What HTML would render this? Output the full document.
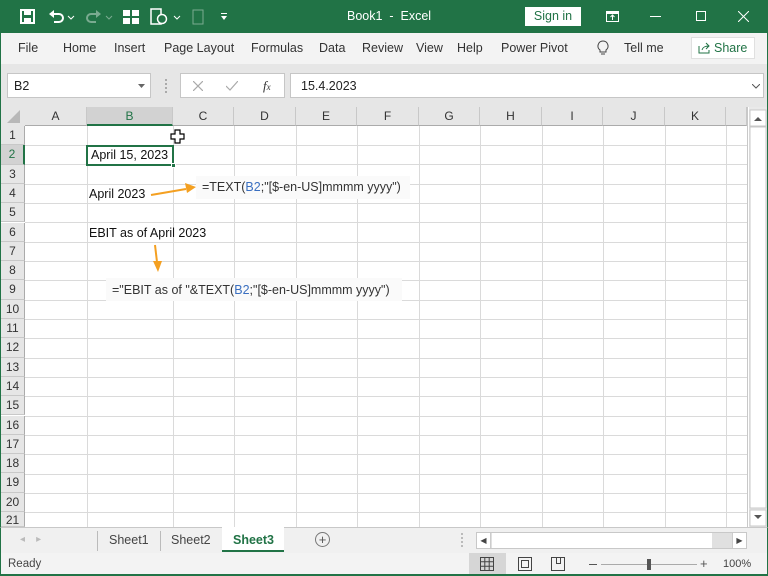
<!DOCTYPE html>
<html><head><meta charset="utf-8"><style>
*{margin:0;padding:0;box-sizing:border-box}
body{width:768px;height:576px;overflow:hidden;font-family:"Liberation Sans",sans-serif;background:#fff;position:relative;font-size:12px;color:#222}
.abs{position:absolute}
#title{left:0;top:0;width:768px;height:33px;background:#217346;color:#fff}
#ribbon{left:0;top:33px;width:768px;height:31px;background:#f3f3f3;border-left:1px solid #217346;border-right:1px solid #217346}
#ribbon span{position:absolute;top:8px;font-size:12.5px;color:#333}
#fbar{left:0;top:64px;width:768px;height:43px;background:#e6e6e6;border-left:1px solid #217346;border-right:1px solid #217346}
.box{position:absolute;background:#fff;border:1px solid #c6c6c6}
.ch{position:absolute;top:107px;height:19px;background:#e6e6e6;border-right:1px solid #c8c8c8;border-bottom:1px solid #ababab;text-align:center;line-height:19px;font-size:12px;color:#333}
.rh{position:absolute;left:1px;width:24px;background:#e6e6e6;border-bottom:1px solid #c8c8c8;border-right:1px solid #ababab;text-align:center;font-size:12px;color:#333}
.t{position:absolute;font-size:12.5px;color:#111;white-space:nowrap}
</style></head><body>
<div id="title" class="abs">
<svg class="abs" style="left:20px;top:9px" width="16" height="16"><rect x="1" y="1" width="13" height="13" fill="none" stroke="#fff" stroke-width="2"/><rect x="4" y="2" width="7" height="4" fill="#fff"/><rect x="4" y="9" width="7" height="5" fill="#fff"/></svg>
<svg class="abs" style="left:48px;top:9px" width="30" height="16"><path d="M4 5h7a4 4 0 0 1 0 8H6" fill="none" stroke="#fff" stroke-width="2"/><path d="M1 5l5-4v8z" fill="#fff"/><path d="M20 7l3 3 3-3" fill="none" stroke="#fff"/></svg>
<svg class="abs" style="left:86px;top:9px" width="30" height="16" opacity=".4"><path d="M12 5H5a4 4 0 0 0 0 8h5" fill="none" stroke="#fff" stroke-width="2"/><path d="M15 5l-5-4v8z" fill="#fff"/><path d="M20 7l3 3 3-3" fill="none" stroke="#fff"/></svg>
<svg class="abs" style="left:123px;top:10px" width="16" height="14"><rect x="0" y="0" width="7" height="6" fill="#fff"/><rect x="9" y="0" width="7" height="6" fill="#fff"/><rect x="0" y="8" width="7" height="6" fill="#fff"/><rect x="9" y="8" width="7" height="6" fill="#fff"/></svg>
<svg class="abs" style="left:150px;top:8px" width="32" height="18"><rect x="1" y="1" width="10" height="15" fill="none" stroke="#fff" stroke-width="1.5"/><circle cx="12" cy="11" r="4.5" fill="#217346" stroke="#fff" stroke-width="1.5"/><path d="M24 8l3 3 3-3" fill="none" stroke="#fff"/></svg>
<svg class="abs" style="left:192px;top:9px" width="14" height="17" opacity=".4"><rect x="1" y="1" width="10" height="14" fill="none" stroke="#fff"/></svg>
<svg class="abs" style="left:220px;top:12px" width="8" height="10"><rect x="1" y="1" width="6" height="1" fill="#fff"/><path d="M1 4h6l-3 4z" fill="#fff"/></svg>
<div class="abs" style="left:347px;top:9px;font-size:12.5px">Book1 &nbsp;- &nbsp;Excel</div>
<div class="abs" style="left:525px;top:7px;width:56px;height:19px;background:#fff;color:#217346;font-size:12.5px;text-align:center;line-height:19px">Sign in</div>
<svg class="abs" style="left:606px;top:11px" width="13" height="11"><rect x=".5" y=".5" width="12" height="10" fill="none" stroke="#fff"/><rect x="1" y="1" width="11" height="2" fill="#fff"/><path d="M6.5 4v5M4.5 6l2-2 2 2" stroke="#fff" fill="none"/></svg>
<div class="abs" style="left:650px;top:16px;width:11px;height:1px;background:#fff"></div>
<div class="abs" style="left:696px;top:11px;width:10px;height:10px;border:1px solid #fff"></div>
<svg class="abs" style="left:738px;top:11px" width="11" height="11"><path d="M0 0L11 11M11 0L0 11" stroke="#fff"/></svg>
</div>
<div id="ribbon" class="abs">
<span style="left:17px">File</span><span style="left:62px">Home</span><span style="left:113px">Insert</span><span style="left:163px">Page Layout</span><span style="left:250px">Formulas</span><span style="left:318px">Data</span><span style="left:361px">Review</span><span style="left:415px">View</span><span style="left:456px">Help</span><span style="left:500px">Power Pivot</span>
<svg class="abs" style="left:596px;top:7px" width="12" height="16"><path d="M6 1a5 5 0 0 1 3 9v2H3v-2A5 5 0 0 1 6 1zM4 14h4" fill="none" stroke="#444"/></svg>
<span style="left:623px">Tell me</span>
<div class="abs" style="left:690px;top:4px;width:64px;height:22px;background:#fff;border:1px solid #e0e0e0"></div>
<svg class="abs" style="left:697px;top:9px" width="13" height="12"><path d="M1 4v7h10V8M4 8c1-3 3-4 7-4M8 1l3 3-3 3" fill="none" stroke="#217346"/></svg>
<span style="left:713px;color:#217346">Share</span>
</div>
<div id="fbar" class="abs">
<div class="box" style="left:6px;top:9px;width:144px;height:25px"><span class="abs" style="left:6px;top:5px;font-size:12.5px">B2</span><svg class="abs" style="left:130px;top:10px" width="7" height="4"><path d="M0 0h7L3.5 4z" fill="#666"/></svg></div>
<div class="abs" style="left:164px;top:15px;width:2px;height:14px;border-left:2px dotted #aaa"></div>
<div class="box" style="left:179px;top:9px;width:105px;height:25px"><svg class="abs" style="left:12px;top:7px" width="10" height="10"><path d="M0 0L10 10M10 0L0 10" stroke="#aaa" stroke-width="1.2"/></svg><svg class="abs" style="left:45px;top:7px" width="12" height="10"><path d="M0 5l4 4 8-9" stroke="#aaa" fill="none" stroke-width="1.2"/></svg><i class="abs" style="left:82px;top:4px;font-family:'Liberation Serif',serif;font-size:13px;color:#333">f<span style="font-size:9px">x</span></i></div>
<div class="box" style="left:289px;top:9px;width:474px;height:25px"><span class="abs" style="left:10px;top:5px;font-size:12.5px">15.4.2023</span><svg class="abs" style="left:461px;top:10px" width="8" height="5"><path d="M0 0l4 4 4-4" fill="none" stroke="#555"/></svg></div>
</div>
<div class="abs" style="left:0;top:107px;width:768px;height:420px;background:#fff;border-left:1px solid #217346;border-right:1px solid #217346"></div>
<svg class="abs" style="left:0;top:0" width="768" height="576">
<g stroke="#dadada" stroke-width="1">
<path d="M87.5 126V527M173.5 126V527M234.5 126V527M296.5 126V527M357.5 126V527M419.5 126V527M480.5 126V527M542.5 126V527M603.5 126V527M665.5 126V527M726.5 126V527"/>
<path d="M25 145.5H747M25 164.5H747M25 184.5H747M25 203.5H747M25 222.5H747M25 242.5H747M25 261.5H747M25 280.5H747M25 300.5H747M25 319.5H747M25 338.5H747M25 358.5H747M25 377.5H747M25 396.5H747M25 416.5H747M25 435.5H747M25 454.5H747M25 474.5H747M25 493.5H747M25 512.5H747"/>
</g>
<path d="M747.5 107V527" stroke="#c8c8c8"/>
<rect x="1" y="107" width="24" height="19" fill="#e6e6e6"/><path d="M20 110v13H7z" fill="#b8b8b8"/>
<rect x="749" y="107" width="18" height="420" fill="#e9e9e9"/>
<rect x="750" y="110" width="16" height="16" fill="#fff" stroke="#c8c8c8"/><path d="M754 121h8l-4-4z" fill="#555"/>
<rect x="750" y="127" width="16" height="381" fill="#fff" stroke="#c8c8c8"/>
<rect x="750" y="510" width="16" height="16" fill="#fff" stroke="#c8c8c8"/><path d="M754 515h8l-4 4z" fill="#555"/>
</svg>
<div class="ch" style="left:25px;width:62px">A</div>
<div class="ch" style="left:87px;width:86px;background:#d2d2d2;border-bottom:2px solid #217346;color:#217346">B</div>
<div class="ch" style="left:173px;width:61px">C</div><div class="ch" style="left:234px;width:62px">D</div><div class="ch" style="left:296px;width:61px">E</div><div class="ch" style="left:357px;width:62px">F</div><div class="ch" style="left:419px;width:61px">G</div><div class="ch" style="left:480px;width:62px">H</div><div class="ch" style="left:542px;width:61px">I</div><div class="ch" style="left:603px;width:62px">J</div><div class="ch" style="left:665px;width:61px">K</div><div class="ch" style="left:726px;width:21px"></div>
<div class="rh" style="top:126px;height:19.3px;line-height:19px">1</div>
<div class="rh" style="top:145.3px;height:19.3px;line-height:19px;background:#d2d2d2;color:#217346;border-right:2px solid #217346">2</div>
<div class="rh" style="top:164.6px;height:19.3px;line-height:19px">3</div>
<div class="rh" style="top:183.9px;height:19.3px;line-height:19px">4</div>
<div class="rh" style="top:203.2px;height:19.3px;line-height:19px">5</div>
<div class="rh" style="top:222.5px;height:19.3px;line-height:19px">6</div>
<div class="rh" style="top:241.8px;height:19.3px;line-height:19px">7</div>
<div class="rh" style="top:261.1px;height:19.3px;line-height:19px">8</div>
<div class="rh" style="top:280.4px;height:19.3px;line-height:19px">9</div>
<div class="rh" style="top:299.7px;height:19.3px;line-height:19px">10</div>
<div class="rh" style="top:319px;height:19.3px;line-height:19px">11</div>
<div class="rh" style="top:338.3px;height:19.3px;line-height:19px">12</div>
<div class="rh" style="top:357.6px;height:19.3px;line-height:19px">13</div>
<div class="rh" style="top:376.9px;height:19.3px;line-height:19px">14</div>
<div class="rh" style="top:396.2px;height:19.3px;line-height:19px">15</div>
<div class="rh" style="top:415.5px;height:19.3px;line-height:19px">16</div>
<div class="rh" style="top:434.8px;height:19.3px;line-height:19px">17</div>
<div class="rh" style="top:454.1px;height:19.3px;line-height:19px">18</div>
<div class="rh" style="top:473.4px;height:19.3px;line-height:19px">19</div>
<div class="rh" style="top:492.7px;height:19.3px;line-height:19px">20</div>
<div class="rh" style="top:512px;height:15px;line-height:17px">21</div>
<div class="abs" style="left:86px;top:145px;width:88px;height:21px;border:2px solid #217346"></div>
<div class="abs" style="left:171px;top:163px;width:5px;height:5px;background:#217346;border:1px solid #fff"></div>
<div class="t" style="left:91px;top:148px">April 15, 2023</div>
<svg class="abs" style="left:170px;top:129px" width="16" height="16"><path d="M5 1h5v4h4v5h-4v4H5v-4H1V5h4z" fill="#fff" stroke="#000" stroke-width="1.2"/></svg>
<div class="t" style="left:89px;top:187px">April 2023</div>
<div class="abs" style="left:196px;top:176px;width:214px;height:23px;background:#fafafa"></div>
<div class="t" style="left:202px;top:180px;color:#333">=TEXT(<span style="color:#3a6fc0">B2</span>;"[$-en-US]mmmm yyyy")</div>
<div class="t" style="left:89px;top:226px">EBIT as of April 2023</div>
<div class="abs" style="left:106px;top:278px;width:296px;height:23px;background:#fafafa"></div>
<div class="t" style="left:112px;top:283px;color:#333">="EBIT as of "&amp;TEXT(<span style="color:#3a6fc0">B2</span>;"[$-en-US]mmmm yyyy")</div>
<svg class="abs" style="left:0;top:0" width="768" height="576"><path d="M151 195L186 189" stroke="#f4a021" stroke-width="2"/><path d="M196 187l-11-4 2 10z" fill="#f4a021"/><path d="M155 245L157 262" stroke="#f4a021" stroke-width="2"/><path d="M158 272l-5-11h9z" fill="#f4a021"/></svg>
<div class="abs" style="left:0;top:527px;width:768px;height:26px;background:#f0f0f0;border-left:1px solid #217346;border-right:1px solid #217346;border-top:1px solid #c8c8c8"></div>
<div class="abs" style="left:20px;top:534px;color:#bbb;font-size:10px">◂ &nbsp; &nbsp;▸</div>
<div class="abs" style="left:97px;top:531px;width:1px;height:20px;background:#bbb"></div>
<div class="abs" style="left:109px;top:533px;font-size:12.5px;color:#444">Sheet1</div>
<div class="abs" style="left:160px;top:531px;width:1px;height:20px;background:#bbb"></div>
<div class="abs" style="left:171px;top:533px;font-size:12.5px;color:#444">Sheet2</div>
<div class="abs" style="left:222px;top:527px;width:62px;height:25px;background:#fff;border-bottom:2px solid #217346"></div>
<div class="abs" style="left:233px;top:533px;font-size:12.5px;color:#217346;font-weight:bold">Sheet3</div>
<div class="abs" style="left:315px;top:532px;width:15px;height:15px;border:1px solid #777;border-radius:50%;text-align:center;line-height:13px;color:#555;font-size:13px">+</div>
<div class="abs" style="left:461px;top:533px;height:14px;border-left:2px dotted #bbb"></div>
<div class="abs" style="left:476px;top:532px;width:271px;height:17px;background:#e0e0e0;border:1px solid #c8c8c8"></div>
<div class="abs" style="left:477px;top:533px;width:14px;height:15px;background:#fff;border-right:1px solid #ccc;font-size:8px;text-align:center;line-height:15px;color:#444">◀</div>
<div class="abs" style="left:492px;top:533px;width:220px;height:15px;background:#fff"></div>
<div class="abs" style="left:732px;top:533px;width:14px;height:15px;background:#fff;border-left:1px solid #ccc;font-size:8px;text-align:center;line-height:15px;color:#444">▶</div>
<div class="abs" style="left:0;top:553px;width:768px;height:23px;background:#f3f3f3;border:1px solid #217346;border-top:none;border-bottom:2px solid #217346"></div>
<div class="abs" style="left:8px;top:558px;font-size:11.5px;color:#444">Ready</div>
<div class="abs" style="left:469px;top:553px;width:37px;height:21px;background:#d6d6d6"></div>
<svg class="abs" style="left:480px;top:557px" width="14" height="14"><path d="M.5 .5h13v13H.5zM.5 4.8h13M.5 9.2h13M4.8 .5v13M9.2 .5v13" fill="none" stroke="#444"/></svg>
<svg class="abs" style="left:518px;top:557px" width="14" height="14"><rect x=".5" y=".5" width="13" height="13" fill="none" stroke="#444"/><rect x="3.5" y="3.5" width="7" height="7" fill="none" stroke="#444"/></svg>
<svg class="abs" style="left:551px;top:557px" width="14" height="14"><path d="M.5 .5h13v13H.5zM5.5 .5v6h4v-6" fill="none" stroke="#444"/></svg>
<div class="abs" style="left:589px;top:564px;width:8px;height:1px;background:#555"></div>
<div class="abs" style="left:601px;top:564px;width:96px;height:1px;background:#aaa"></div>
<div class="abs" style="left:647px;top:559px;width:4px;height:11px;background:#555"></div>
<div class="abs" style="left:700px;top:556px;font-size:13px;color:#555">+</div>
<div class="abs" style="left:723px;top:558px;font-size:11px;color:#444">100%</div>
</body></html>
